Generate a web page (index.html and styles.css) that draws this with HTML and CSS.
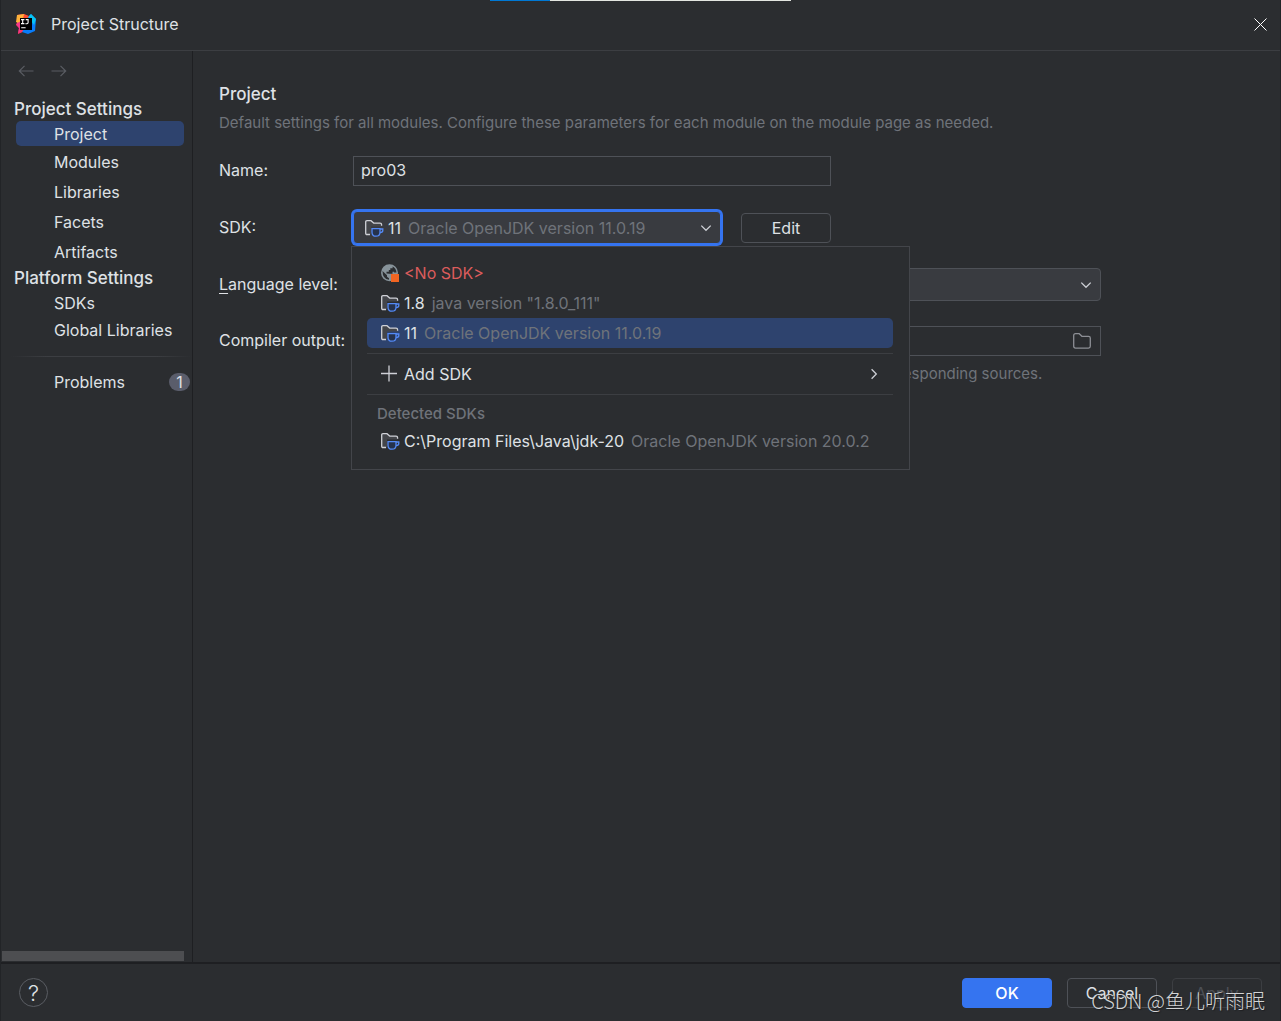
FILE: index.html
```html
<!DOCTYPE html>
<html lang="en">

<head>
    <meta charset="utf-8">
    <title>Project Structure</title>
    <link rel="stylesheet" href="styles.css">
</head>

<body>
    <!-- Shared icons -->
    <svg class="sprite" aria-hidden="true">
        <symbol id="icon-sdk" viewBox="0 0 20 18">
            <path d="M1.7 15V3.2q0-1.5 1.5-1.5h3.9l2.6 2.4h6.1q1.8 0 1.8 1.8v1.5H7v8.1H3.2q-1.5 0-1.5-1.5z" fill="#43454a" />
            <path d="M6 15.5H3q-1.3 0-1.3-1.3V3q0-1.3 1.3-1.3h4l2.7 2.4H16q1.6 0 1.6 1.6v1" fill="none" stroke="#ced0d6" stroke-width="1.3" />
            <path d="M8 9.7h8v3.5q0 4-4 4t-4-4z" fill="#25324d" stroke="#548af7" stroke-width="1.3" />
            <path d="M16 10h2.8v1.5q0 2-2.8 2.2" fill="none" stroke="#548af7" stroke-width="1.3" />
        </symbol>
        <symbol id="icon-chevron" viewBox="0 0 12 12">
            <path d="M1.3 3.6 6 8.3l4.7-4.7" fill="none" stroke="#ced0d6" stroke-width="1.3" />
        </symbol>
    </svg>

    <div class="progress"><span class="progress-done"></span><span class="progress-rest"></span></div>

    <header class="titlebar">
        <svg class="logo" width="20" height="20" viewBox="0 0 20 20" aria-hidden="true">
            <path d="M1 1 8 0 11 4 9 17 2 20 3 14 0 11 2 7z" fill="#fe315d" />
            <path d="M1 1 8 0 9 5 2 9 0 8z" fill="#ffb13b" />
            <path d="M0 10 5 7 5 16 2 20 3 14z" fill="#f43a8c" />
            <path d="M12 3 15 0 20 5 19 17 12 20 6 18 10 12z" fill="#087cfa" />
            <path d="M12 3 15 0 20 5 18 11z" fill="#07c3f2" />
            <path d="M8 0 13 2 11 5 7 5z" fill="#ff4e32" />
            <rect x="4" y="4" width="12" height="12" fill="#000" />
            <path d="M5 5.6h3.4M6.7 5.6v4M5 9.6h3.4M9.7 5.6h2.4v3q0 1.2-1.2 1.2H9.4M5.2 13.8h4.4" fill="none" stroke="#fff" stroke-width="1.1" />
        </svg>
        <h1 class="title">Project Structure</h1>
        <button class="close" aria-label="Close">
            <svg width="13" height="13" viewBox="0 0 13 13">
                <path d="M.5.5l12 12M12.5.5l-12 12" stroke="#fff" />
            </svg>
        </button>
    </header>

    <div class="content">
        <nav class="sidebar">
            <div class="history">
                <button class="arrow" aria-label="Back">
                    <svg width="16" height="12" viewBox="0 0 16 12">
                        <path d="M15.5 6H1.5M6.5.8 1.3 6l5.2 5.2" fill="none" stroke="#5a5d63" stroke-width="1.2" />
                    </svg>
                </button>
                <button class="arrow" aria-label="Forward">
                    <svg width="16" height="12" viewBox="0 0 16 12">
                        <path d="M.5 6h14M9.5.8 14.7 6l-5.2 5.2" fill="none" stroke="#5a5d63" stroke-width="1.2" />
                    </svg>
                </button>
            </div>

            <h2 class="group">Project Settings</h2>
            <a class="item selected" href="#project">Project</a>
            <a class="item" href="#modules">Modules</a>
            <a class="item" href="#libraries">Libraries</a>
            <a class="item" href="#facets">Facets</a>
            <a class="item" href="#artifacts">Artifacts</a>

            <h2 class="group">Platform Settings</h2>
            <a class="item compact" href="#sdks">SDKs</a>
            <a class="item compact" href="#global">Global Libraries</a>

            <div class="divider"></div>
            <a class="item problems" href="#problems">Problems <span class="badge">1</span></a>

            <div class="scroll-thumb"></div>
        </nav>

        <main class="page">
            <h2 class="heading">Project</h2>
            <p class="description">Default settings for all modules. Configure these parameters for each module on the module page as needed.</p>

            <form class="form">
                <label for="name">Name:</label>
                <div class="control short">
                    <input class="field" id="name" type="text" value="pro03">
                </div>

                <label for="sdk">SDK:</label>
                <div class="control short sdk-row">
                    <div class="combo focused">
                        <svg class="sdk-icon" width="20" height="18"><use href="#icon-sdk" /></svg>
                        <span class="version">11</span>
                        <select class="combo-select" id="sdk">
                            <option>Oracle OpenJDK version 11.0.19</option>
                        </select>
                        <svg class="chevron" width="12" height="12"><use href="#icon-chevron" /></svg>
                    </div>
                    <button class="button" type="button">Edit</button>

                    <div class="popup">
                        <button class="option" type="button">
                            <svg class="sdk-icon" width="20" height="18" viewBox="0 0 20 18" aria-hidden="true">
                                <circle cx="9.5" cy="8.7" r="8.5" fill="#87939a" />
                                <path d="M2.500 7l4.500 4.300v1.500l2 1.500v1.500Q2.500 15 2.500 7zM6.500 9.500V7.800h2.300V6h1.500V4.300h2.300V2.500Q16 4 16.500 8.500H14V7.800h-1.500v2H9.500z" fill="#2b2d30" />
                                <rect x="11" y="10" width="8" height="8" fill="#f26522" />
                            </svg>
                            <span class="missing">&lt;No SDK&gt;</span>
                        </button>
                        <button class="option" type="button">
                            <svg class="sdk-icon" width="20" height="18"><use href="#icon-sdk" /></svg>
                            <span>1.8</span> <span class="muted">java version "1.8.0_111"</span>
                        </button>
                        <button class="option active" type="button">
                            <svg class="sdk-icon" width="20" height="18"><use href="#icon-sdk" /></svg>
                            <span>11</span> <span class="muted">Oracle OpenJDK version 11.0.19</span>
                        </button>
                        <hr class="separator">
                        <button class="option" type="button">
                            <svg class="sdk-icon" width="20" height="18" viewBox="0 0 20 18" aria-hidden="true">
                                <path d="M1 8.500h16M9 .500v16" stroke="#ced0d6" stroke-width="1.300" />
                            </svg>
                            <span>Add SDK</span>
                            <svg class="submenu" width="12" height="12" viewBox="0 0 12 12" aria-hidden="true">
                                <path d="M3.600 1.300 8.300 6l-4.700 4.700" fill="none" stroke="#ced0d6" stroke-width="1.300" />
                            </svg>
                        </button>
                        <hr class="separator">
                        <div class="caption">Detected SDKs</div>
                        <button class="option" type="button">
                            <svg class="sdk-icon" width="20" height="18"><use href="#icon-sdk" /></svg>
                            <span>C:\Program Files\Java\jdk-20</span> <span class="muted">Oracle OpenJDK version 20.0.2</span>
                        </button>
                    </div>
                </div>

                <label for="level"><u>L</u>anguage level:</label>
                <div class="control combo">
                    <select class="combo-select" id="level">
                        <option>SDK default</option>
                    </select>
                    <svg class="chevron" width="12" height="12"><use href="#icon-chevron" /></svg>
                </div>

                <label for="output">Compiler output:</label>
                <div class="control path">
                    <input class="path-input" id="output" type="text">
                    <button class="browse" type="button" aria-label="Browse">
                        <svg width="18" height="16" viewBox="0 0 18 16">
                            <path d="M.700 13.300V2.500Q.700.700 2.500.700h3.700l2.700 2.600h6.600q1.800 0 1.800 1.800v8.200q0 1.800-1.800 1.800h-13q-1.800 0-1.800-1.800z" fill="none" stroke="#8c8e94" stroke-width="1.300" />
                        </svg>
                    </button>
                </div>
                <p class="hint">Used for modules' subdirectories, Production and Test directories for the corresponding sources.</p>
            </form>
        </main>
    </div>

    <footer class="footer">
        <button class="help" aria-label="Help">?</button>
        <button class="button primary">OK</button>
        <button class="button">Cancel</button>
        <button class="button" disabled>Apply</button>
    </footer>

    <div class="watermark">CSDN @鱼儿听雨眠</div>
</body>

</html>
```
FILE: styles.css
```css
* {
    box-sizing: border-box;
    margin: 0;
    padding: 0;
}

body {
    background-color: #2b2d30;
    border-left: 1px solid #222427;
    border-right: 1px solid #222427;
    color: #dfe1e5;
    display: flex;
    flex-direction: column;
    font-family: Inter, "Noto Sans CJK SC", sans-serif;
    font-size: 16px;
    line-height: 24px;
    min-height: 100vh;
    position: relative;
}

button,
input,
select {
    background: none;
    border: none;
    color: inherit;
    font: inherit;
    outline: none;
}

svg {
    display: block;
    flex-shrink: 0;
}

.sprite {
    height: 0;
    position: absolute;
    width: 0;
}

.progress {
    display: flex;
    height: 1px;
    left: 489px;
    position: absolute;
    top: 0;
    width: 301px;
}

.progress-done {
    background-color: #0078d4;
    width: 60px;
}

.progress-rest {
    background-color: #e3e6e1;
    flex: 1;
}

/* Title bar */
.titlebar {
    align-items: center;
    border-bottom: 1px solid #3c3e42;
    display: flex;
    gap: 15px;
    height: 51px;
    padding: 0 13px 2px 15px;
}

.title {
    flex: 1;
    font-size: 16px;
    font-weight: 400;
}

.content {
    display: flex;
    flex: 1;
}

/* Sidebar */
.sidebar {
    border-right: 1px solid #1e1f22;
    display: flex;
    flex-direction: column;
    flex-shrink: 0;
    padding-bottom: 1px;
    width: 192px;
}

.history {
    display: flex;
    gap: 17px;
    padding: 14px 17px 21px;
}

.group {
    font-size: 17px;
    font-weight: 500;
    line-height: 24px;
    margin-top: -1px;
    padding-left: 13px;
}

.item {
    border-radius: 5px;
    color: inherit;
    line-height: 30px;
    margin: 0 8px 0 15px;
    padding-left: 38px;
    text-decoration: none;
}

.item.selected {
    background-color: #2e436e;
    line-height: 24px;
    margin-bottom: 1px;
    padding-top: 1px;
}

.item.compact {
    line-height: 27px;
}

.divider {
    background: linear-gradient(to right, transparent, #3c3e42 20%, #3c3e42 80%, transparent);
    height: 1px;
    margin: 12px 0 10px 10px;
}

.item.problems {
    align-items: center;
    display: flex;
    justify-content: space-between;
    margin-right: 2px;
}

.badge {
    background-color: #5a5d6b;
    border-radius: 9px;
    line-height: 18px;
    text-align: center;
    width: 21px;
}

.scroll-thumb {
    background-color: #4d4e51;
    height: 10px;
    margin: auto 8px 0 1px;
}

/* Project page */
.page {
    flex: 1;
    padding: 31px 26px;
}

.heading {
    font-size: 17px;
    font-weight: 500;
}

.description,
.hint {
    color: #6f737a;
    font-size: 15px;
}

.description {
    margin: 5px 0 7px;
}

.form {
    align-items: center;
    display: grid;
    grid-template-columns: 134px minmax(0, 748px);
    grid-template-rows: repeat(3, 57px) 55px;
}

label {
    padding-bottom: 2px;
}

u {
    text-underline-offset: 3px;
}

.control {
    min-width: 0;
}

.short {
    max-width: 478px;
}

.field,
.path {
    border: 1px solid #4e5157;
    height: 30px;
    width: 100%;
}

.field {
    padding: 0 7px 1px;
}

.sdk-row {
    align-items: center;
    display: flex;
    gap: 20px;
    position: relative;
}

.combo {
    align-items: center;
    background-color: #393b40;
    border: 1px solid #4e5157;
    border-radius: 4px;
    display: flex;
    height: 33px;
    padding: 0 8px;
}

.combo.focused {
    border-color: #3574f0;
    box-shadow: 0 0 0 2px #3574f0;
    flex: 1;
    padding: 0 8px 0 10px;
}

.sdk-icon {
    margin-right: 4px;
}

.version {
    margin-right: 7px;
}

.combo-select {
    appearance: none;
    flex: 1;
    min-width: 0;
}

.focused .combo-select,
.muted {
    color: #6f737a;
}

.button {
    border: 1px solid #4e5157;
    border-radius: 4px;
    height: 30px;
    width: 90px;
}

.path {
    align-items: center;
    display: flex;
    padding: 0 9px;
}

.path-input {
    flex: 1;
    min-width: 0;
}

.hint {
    grid-column: 2;
    margin-top: -6px;
}

/* SDK list */
.popup {
    background-color: #2b2d30;
    border: 1px solid #43454a;
    left: -2px;
    padding: 11px 16px 13px 15px;
    position: absolute;
    top: 35px;
    width: 559px;
    z-index: 1;
}

.option {
    align-items: center;
    border-radius: 5px;
    display: flex;
    height: 30px;
    padding: 0 13px;
    white-space: nowrap;
    width: 100%;
}

.option.active {
    background-color: #2e436e;
}

.option .muted {
    margin-left: 7px;
}

.missing {
    color: #db5c5c;
}

.submenu {
    margin-left: auto;
}

.separator {
    border: none;
    border-top: 1px solid #3c3e42;
    margin: 5px 0;
}

.caption {
    color: #6f737a;
    font-size: 15px;
    font-weight: 500;
    padding: 2px 10px 0;
}

/* Footer */
.footer {
    align-items: center;
    border-top: 2px solid #1e1f22;
    display: flex;
    gap: 15px;
    height: 59px;
    padding: 0 18px;
}

.help {
    border: 1px solid #5a5d63;
    border-radius: 50%;
    font-size: 22px;
    font-weight: 300;
    height: 29px;
    margin-right: auto;
    width: 29px;
}

.primary {
    background-color: #3574f0;
    border-color: #3574f0;
    color: #fff;
    font-weight: 500;
}

.button:disabled {
    border-color: #3c3e42;
    color: #4e5157;
}

.watermark {
    bottom: 5px;
    color: #d2d3d4;
    font-family: "Noto Sans CJK SC", sans-serif;
    font-size: 20px;
    font-weight: 300;
    line-height: 30px;
    position: absolute;
    right: 15px;
    text-shadow: 1px 1px 1px #1e1f22;
}
```
